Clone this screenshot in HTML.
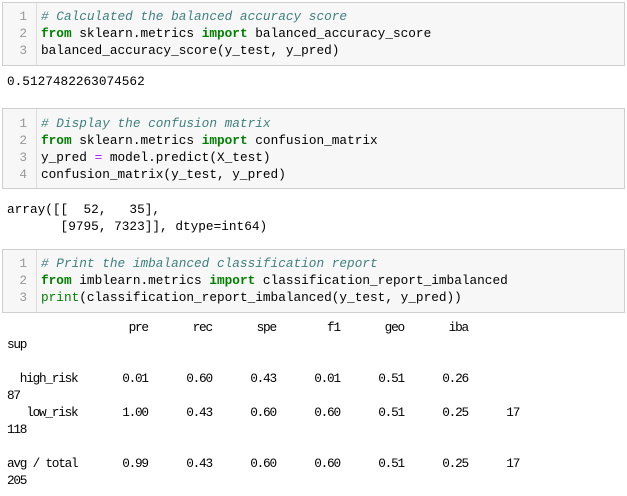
<!DOCTYPE html>
<html><head><style>
body{margin:0;width:627px;height:496px;background:#fff;overflow:hidden;position:relative;font-family:"Liberation Mono",monospace;font-size:12.75px;color:#000}
pre{margin:0;font:inherit;line-height:17px;position:absolute;white-space:pre}
.box{position:absolute;left:2px;width:621px;background:#f7f7f7;border:1px solid #cfcfcf}
.gut{position:absolute;left:0;top:0;bottom:0;width:33px;border-right:1px solid #ddd}
.ln{color:#999;text-align:right;width:25px;left:2px}
.c{color:#408080;font-style:italic}
.k{color:#008000;font-weight:bold}
.b{color:#008000}
.o{color:#aa22ff}
</style></head><body>
<div class="box" style="top:2px;height:62px"><div class="gut"></div></div>
<pre class="ln" style="top:8px">1
2
3</pre>
<pre style="top:8px;left:41px"><span class="c"># Calculated the balanced accuracy score</span>
<span class="k">from</span> sklearn.metrics <span class="k">import</span> balanced_accuracy_score
balanced_accuracy_score(y_test, y_pred)</pre>
<pre style="top:73px;left:7px">0.5127482263074562</pre>

<div class="box" style="top:108px;height:79px"><div class="gut"></div></div>
<pre class="ln" style="top:115px">1
2
3
4</pre>
<pre style="top:115px;left:41px"><span class="c"># Display the confusion matrix</span>
<span class="k">from</span> sklearn.metrics <span class="k">import</span> confusion_matrix
y_pred <span class="o">=</span> model.predict(X_test)
confusion_matrix(y_test, y_pred)</pre>
<pre style="top:201px;left:7px">array([[  52,   35],
       [9795, 7323]], dtype=int64)</pre>

<div class="box" style="top:249px;height:62px"><div class="gut"></div></div>
<pre class="ln" style="top:255px">1
2
3</pre>
<pre style="top:255px;left:41px"><span class="c"># Print the imbalanced classification report</span>
<span class="k">from</span> imblearn.metrics <span class="k">import</span> classification_report_imbalanced
<span class="b">print</span>(classification_report_imbalanced(y_test, y_pred))</pre>

<pre style="top:319px;left:7px;letter-spacing:-1.25px">                   pre       rec       spe        f1       geo       iba       
sup

  high_risk       0.01      0.60      0.43      0.01      0.51      0.26        
87
   low_risk       1.00      0.43      0.60      0.60      0.51      0.25      17
118

avg / total       0.99      0.43      0.60      0.60      0.51      0.25      17
205</pre>
</body></html>
